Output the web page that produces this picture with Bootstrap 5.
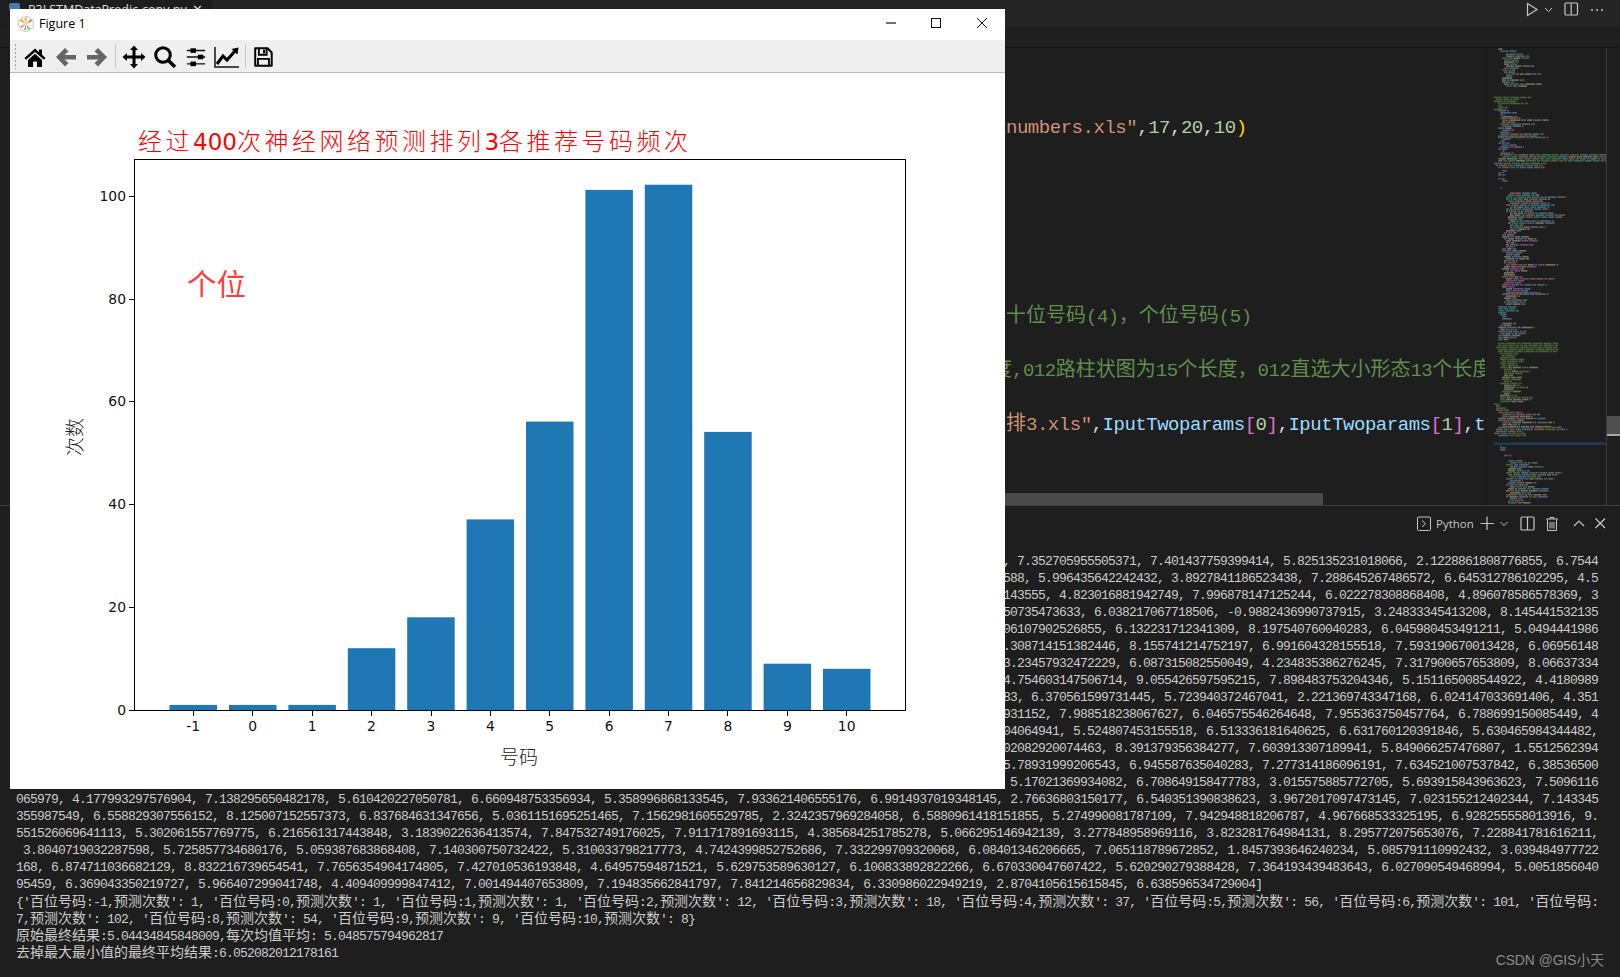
<!doctype html>
<html lang="zh">
<head>
<meta charset="utf-8">
<title>Figure 1</title>
<link href="https://cdn.jsdelivr.net/npm/bootstrap@5.3.0/dist/css/bootstrap.min.css" rel="stylesheet">
<style>
html,body{height:977px;overflow:hidden}
body{background:#1e1e1e;color:#ccc;font-family:"Liberation Sans","Noto Sans CJK SC",sans-serif}
.ide-tabs{height:26px;background:#252526;flex:none}
.ide-tab{width:212px;height:26px;background:#1e1e1e;color:#ddd;font:12.5px/20px "Open Sans",sans-serif}
.ide-tab-name{margin-left:7px;width:164px}
.ide-crumbs{height:22px;flex:none;background:#1f1f1f;border-bottom:1px solid #161616}
.ide-editor{height:457px;flex:none}
.code-pane{width:1486px;flex:none;border-right:1px solid #181818}
.code-view{flex:1 1 auto;padding-top:67px;font:19px/27px "Liberation Mono","Noto Sans CJK SC",monospace;letter-spacing:-.47px;color:#d4d4d4}
.code-line{height:27px;padding-left:1006px;white-space:nowrap}
.code-line-shift{padding-left:992px}
.code-line .han{font:20px/1 "Noto Sans CJK SC",sans-serif;letter-spacing:0}
.tk-str{color:#ce9178}.tk-num{color:#b5cea8}.tk-par{color:#ffd700}.tk-com{color:#5f8f4c}.tk-var{color:#9cdcfe}.tk-brk{color:#da70d6}
.hscroll{height:12px;flex:none;padding-left:60px}
.hscroll-thumb{width:1263px;height:12px;background:#4a4a4a}
.mini-map{width:120px;flex:none;background:#1e1e1e}
.mini-map svg{display:block}
.v-track{width:14px;flex:none;border-left:1px solid #3a3a3a}
.v-thumb{left:0;right:0;top:368px;height:20px;background:#4f4f4f;border-bottom:2px solid #a8a8a8}
.term{flex:1 1 auto;border-top:1px solid #3c3c3c;background:#1e1e1e}
.term-tools{height:35px;flex:none}
.term-body{padding:12px 22px 0 16px;font:13px/17px "Liberation Mono","Noto Sans CJK SC",monospace;letter-spacing:-.8px;color:#cccccc}
.term-line{height:17px;white-space:pre}
.term-line .han{font:14px/1 "Noto Sans CJK SC",sans-serif;letter-spacing:0}
.water{right:16px;bottom:7px;color:#8c8c8c;font:13.8px/18px "Liberation Sans","Noto Sans CJK SC",sans-serif}
.fig-win{left:10px;top:9px;width:995px;height:780px;background:#fff;color:#000}
.fig-title{height:31px;flex:none}
.fig-logo{margin:0 5px 1px 8px}
.fig-name{font:12.5px/29px "Open Sans",sans-serif;padding-bottom:2px}
.fig-tools{height:33px;flex:none;background:#efefef;border-bottom:1px solid #bcbcbc}
.fig-grip{width:3px;height:26px;margin:0 2px 0 4px;background-image:radial-gradient(#9a9a9a 1px,transparent 1px);background-size:3px 4px}
.tool-slot{width:31px;height:32px;border:0;background:none;padding:2px 0 0}
.tool-slot svg{display:block;margin:auto}
.tool-sep{width:1px;height:24px;margin:0 2.5px;background:#c9c9c9}
.tool-sep-b{margin-right:1.5px}
.fig-canvas{flex:1 1 auto}
.fig-canvas svg{display:block}
.tick-t{font:13.9px "DejaVu Sans",sans-serif;fill:#111}
.ttl-han{font:24px "Noto Sans CJK SC",sans-serif;font-weight:300;letter-spacing:3.5px}
.ttl-num{font:23px "DejaVu Sans",sans-serif;letter-spacing:0}
.ax-lab{font:19px "Noto Sans CJK SC",sans-serif;font-weight:300;fill:#222}
.pos-lab{font:29.5px "Noto Sans CJK SC",sans-serif;fill:#ff3b3b}
</style>
</head>
<body class="d-flex flex-column position-relative">

<div class="ide-tabs d-flex justify-content-between">
  <div class="ide-tab d-flex ps-2 overflow-hidden">
    <svg width="13" height="20" viewBox="0 0 13 20" class="flex-none"><rect x="1" y="3" width="11" height="7" rx="2" fill="#3d7fb3"/><rect x="3" y="9" width="9" height="6" rx="2" fill="#d7b84a"/></svg>
    <span class="ide-tab-name text-nowrap">P3LSTMDataPredic-copy.py</span>
    <span class="text-nowrap">✕</span>
  </div>
  <svg width="100" height="26" viewBox="1520 0 100 26">
    <path d="M1527.5 3.5 L1537 9.5 L1527.5 15.5Z" fill="none" stroke="#c5c5c5" stroke-width="1.2"/>
    <path d="M1545 8 L1548.5 11.5 L1552 8" fill="none" stroke="#c5c5c5"/>
    <rect x="1565" y="3" width="12.5" height="12" rx="1" fill="none" stroke="#c5c5c5" stroke-width="1.2"/><path d="M1571.2 3V15" stroke="#c5c5c5" stroke-width="1.2"/>
    <circle cx="1592" cy="10" r="1" fill="#c5c5c5"/><circle cx="1597" cy="10" r="1" fill="#c5c5c5"/><circle cx="1602" cy="10" r="1" fill="#c5c5c5"/>
  </svg>
</div>
<div class="ide-crumbs"></div>

<div class="ide-editor d-flex">
  <div class="code-pane d-flex flex-column overflow-hidden">
    <div class="code-view overflow-hidden">
      <div class="code-line"><span class="tk-str">numbers.xls"</span>,<span class="tk-num">17</span>,<span class="tk-num">20</span>,<span class="tk-num">10</span><span class="tk-par">)</span></div>
      <div class="code-line"></div><div class="code-line"></div><div class="code-line"></div><div class="code-line"></div><div class="code-line"></div><div class="code-line"></div>
      <div class="code-line tk-com"><span class="han">十位号码</span>(4)<span class="han">，个位号码</span>(5)</div>
      <div class="code-line"></div>
      <div class="code-line code-line-shift tk-com"><span class="han">度</span>,012<span class="han">路柱状图为</span>15<span class="han">个长度，</span>012<span class="han">直选大小形态</span>13<span class="han">个长度</span></div>
      <div class="code-line"></div>
      <div class="code-line"><span class="tk-str"><span class="han">排</span>3.xls"</span>,<span class="tk-var">IputTwoparams</span><span class="tk-brk">[</span><span class="tk-num">0</span><span class="tk-brk">]</span>,<span class="tk-var">IputTwoparams</span><span class="tk-brk">[</span><span class="tk-num">1</span><span class="tk-brk">]</span>,<span class="tk-var">t</span></div>
    </div>
    <div class="hscroll"><div class="hscroll-thumb"></div></div>
  </div>
  <div class="mini-map overflow-hidden"><svg id="miniSvg" width="120" height="457" viewBox="0 0 120 457"></svg></div>
  <div class="v-track position-relative"><div class="v-thumb position-absolute"></div></div>
</div>

<div class="term d-flex flex-column overflow-hidden">
  <div class="term-tools d-flex justify-content-end">
    <svg width="210" height="35" viewBox="1410 506 210 35">
      <rect x="1417.5" y="517" width="13" height="13.5" rx="1" fill="none" stroke="#c5c5c5"/><path d="M1422 520.5 L1425.5 523.7 L1422 527" fill="none" stroke="#c5c5c5"/>
      <text x="1436" y="527.5" fill="#c5c5c5" font-family="Open Sans" font-size="11.5">Python</text>
      <path d="M1487 516.5V530M1480.5 523.5H1494" stroke="#c5c5c5" stroke-width="1.2"/>
      <path d="M1500.5 522 L1504 525.5 L1507.5 522" fill="none" stroke="#c5c5c5"/>
      <rect x="1521" y="517" width="13" height="13" rx="1" fill="none" stroke="#c5c5c5" stroke-width="1.2"/><path d="M1527.5 517V530" stroke="#c5c5c5" stroke-width="1.2"/>
      <path d="M1546 519H1558M1550 519V517.5H1554V519M1547.5 519.5V530.5H1556.5V519.5M1550 522V528.5M1552 522V528.5M1554 522V528.5" fill="none" stroke="#c5c5c5"/>
      <path d="M1574 526 L1579 521 L1584 526" fill="none" stroke="#c5c5c5" stroke-width="1.2"/>
      <path d="M1595.5 518.5 L1605 528M1605 518.5 L1595.5 528" fill="none" stroke="#c5c5c5" stroke-width="1.3"/>
    </svg>
  </div>
  <div class="term-body">
    <div class="term-line text-end">, 7.352705955505371, 7.401437759399414, 5.825135231018066, 2.1228861808776855, 6.7544</div>
    <div class="term-line text-end">588, 5.996435642242432, 3.8927841186523438, 7.288645267486572, 6.645312786102295, 4.5</div>
    <div class="term-line text-end">143555, 4.823016881942749, 7.996878147125244, 6.022278308868408, 4.896078586578369, 3</div>
    <div class="term-line text-end">50735473633, 6.038217067718506, -0.9882436990737915, 3.24833345413208, 8.145441532135</div>
    <div class="term-line text-end">06107902526855, 6.132231712341309, 8.197540760040283, 6.045980453491211, 5.0494441986</div>
    <div class="term-line text-end">.308714151382446, 8.155741214752197, 6.991604328155518, 7.593190670013428, 6.06956148</div>
    <div class="term-line text-end">3.23457932472229, 6.087315082550049, 4.234835386276245, 7.317900657653809, 8.06637334</div>
    <div class="term-line text-end">4.754603147506714, 9.055426597595215, 7.898483753204346, 5.151165008544922, 4.4180989</div>
    <div class="term-line text-end">83, 6.370561599731445, 5.723940372467041, 2.221369743347168, 6.024147033691406, 4.351</div>
    <div class="term-line text-end">931152, 7.988518238067627, 6.046575546264648, 7.955363750457764, 6.788699150085449, 4</div>
    <div class="term-line text-end">04064941, 5.524807453155518, 6.513336181640625, 6.631760120391846, 5.630465984344482,</div>
    <div class="term-line text-end">02082920074463, 8.391379356384277, 7.603913307189941, 5.849066257476807, 1.5512562394</div>
    <div class="term-line text-end">5.78931999206543, 6.945587635040283, 7.277314186096191, 7.634521007537842, 6.38536500</div>
    <div class="term-line text-end"> 5.17021369934082, 6.708649158477783, 3.015575885772705, 5.693915843963623, 7.5096116</div>
    <div class="term-line">065979, 4.177993297576904, 7.138295650482178, 5.610420227050781, 6.660948753356934, 5.358996868133545, 7.933621406555176, 6.9914937019348145, 2.76636803150177, 6.540351390838623, 3.9672017097473145, 7.023155212402344, 7.143345</div>
    <div class="term-line">355987549, 6.558829307556152, 8.125007152557373, 6.837684631347656, 5.0361151695251465, 7.1562981605529785, 2.3242357969284058, 6.5880961418151855, 5.274990081787109, 7.942948818206787, 4.967668533325195, 6.928255558013916, 9.</div>
    <div class="term-line">551526069641113, 5.302061557769775, 6.216561317443848, 3.1839022636413574, 7.847532749176025, 7.911717891693115, 4.385684251785278, 5.066295146942139, 3.277848958969116, 3.823281764984131, 8.295772075653076, 7.228841781616211,</div>
    <div class="term-line"> 3.8040719032287598, 5.725857734680176, 5.059387683868408, 7.140300750732422, 5.310033798217773, 4.7424399852752686, 7.332299709320068, 6.08401346206665, 7.065118789672852, 1.8457393646240234, 5.085791110992432, 3.039484977722</div>
    <div class="term-line">168, 6.874711036682129, 8.832216739654541, 7.7656354904174805, 7.427010536193848, 4.64957594871521, 5.629753589630127, 6.100833892822266, 6.670330047607422, 5.620290279388428, 7.364193439483643, 6.027090549468994, 5.0051856040</div>
    <div class="term-line">95459, 6.369043350219727, 5.966407299041748, 4.409409999847412, 7.001494407653809, 7.194835662841797, 7.841214656829834, 6.330986022949219, 2.8704105615615845, 6.638596534729004]</div>
    <div class="term-line">{'<span class="han">百位号码</span>:-1,<span class="han">预测次数</span>': 1, '<span class="han">百位号码</span>:0,<span class="han">预测次数</span>': 1, '<span class="han">百位号码</span>:1,<span class="han">预测次数</span>': 1, '<span class="han">百位号码</span>:2,<span class="han">预测次数</span>': 12, '<span class="han">百位号码</span>:3,<span class="han">预测次数</span>': 18, '<span class="han">百位号码</span>:4,<span class="han">预测次数</span>': 37, '<span class="han">百位号码</span>:5,<span class="han">预测次数</span>': 56, '<span class="han">百位号码</span>:6,<span class="han">预测次数</span>': 101, '<span class="han">百位号码</span>:</div>
    <div class="term-line">7,<span class="han">预测次数</span>': 102, '<span class="han">百位号码</span>:8,<span class="han">预测次数</span>': 54, '<span class="han">百位号码</span>:9,<span class="han">预测次数</span>': 9, '<span class="han">百位号码</span>:10,<span class="han">预测次数</span>': 8}</div>
    <div class="term-line"><span class="han">原始最终结果</span>:5.04434845848009,<span class="han">每次均值平均</span>: 5.048575794962817</div>
    <div class="term-line"><span class="han">去掉最大最小值的最终平均结果</span>:6.052082012178161</div>
  </div>
</div>

<div class="water position-absolute">CSDN @GIS小天</div>

<!-- matplotlib figure window -->
<div class="fig-win position-absolute d-flex flex-column">
  <div class="fig-title d-flex align-items-center">
    <svg class="fig-logo" width="16" height="16" viewBox="0 0 16 16"><circle cx="8" cy="8" r="7.5" fill="#fff" stroke="#bbb" stroke-width=".8"/><path d="M8 8 L2 5 L3 3Z" fill="#f59a23"/><path d="M8 8 L6 2 L9 2Z" fill="#f4c020"/><path d="M8 8 L13 3 L14 5Z" fill="#e25a2b"/><path d="M8 8 L2 10 L4 12Z" fill="#f0a040"/><path d="M8 8 L13 13 L10 14Z" fill="#86c070"/><path d="M8 8 L8 14 L6 14Z" fill="#6aa0c8"/></svg>
    <span class="fig-name flex-grow-1">Figure 1</span>
    <svg width="120" height="31" viewBox="885 9 120 31">
      <path d="M886 23H896" stroke="#111" stroke-width="1.2"/>
      <rect x="931.5" y="18.5" width="9" height="9" fill="none" stroke="#111"/>
      <path d="M977 18 L987 28M987 18 L977 28" stroke="#111"/>
    </svg>
  </div>
  <div class="fig-tools d-flex align-items-center">
    <div class="fig-grip"></div>
    <button class="tool-slot" type="button" aria-label="Home"><svg width="24" height="24" viewBox="0 0 24 24"><path d="M12 3.5 L1.5 13 L3 14.7 L12 7 L21 14.7 L22.5 13 L19 9.8 V4.5 H16 V7.2Z M5 15 V22 H10 V16.5 H14 V22 H19 V15 L12 8.8Z" fill="#000"/></svg></button>
    <button class="tool-slot" type="button" aria-label="Back"><svg width="24" height="24" viewBox="0 0 24 24"><path d="M2 12 L11 3 L14.5 6.5 L10.5 10 H22 V14.5 H10.5 L14.5 18 L11 21.5Z" fill="#666"/></svg></button>
    <button class="tool-slot" type="button" aria-label="Forward"><svg width="24" height="24" viewBox="0 0 24 24"><path d="M22 12 L13 3 L9.5 6.5 L13.5 10 H2 V14.5 H13.5 L9.5 18 L13 21.5Z" fill="#666"/></svg></button>
    <div class="tool-sep"></div>
    <button class="tool-slot" type="button" aria-label="Pan"><svg width="24" height="24" viewBox="0 0 24 24"><path d="M12 0.5 L16 5 H13.5 V10.5 H19 V8 L23.5 12 L19 16 V13.5 H13.5 V19 H16 L12 23.5 L8 19 H10.5 V13.5 H5 V16 L0.5 12 L5 8 V10.5 H10.5 V5 H8Z" fill="#000"/></svg></button>
    <button class="tool-slot" type="button" aria-label="Zoom"><svg width="24" height="24" viewBox="0 0 24 24"><circle cx="10" cy="10" r="7.3" fill="none" stroke="#000" stroke-width="3"/><path d="M15.5 15.5 L22 22" stroke="#000" stroke-width="3.6"/></svg></button>
    <button class="tool-slot" type="button" aria-label="Subplots"><svg width="22" height="22" viewBox="0 0 24 24"><path d="M2 5H22M2 12H22M2 19.5H22" stroke="#111" stroke-width="1.6"/><rect x="6" y="2.5" width="6" height="5" fill="#000"/><rect x="14" y="9.5" width="6" height="5" fill="#000"/><rect x="6" y="17" width="6" height="5" fill="#000"/></svg></button>
    <button class="tool-slot" type="button" aria-label="Edit"><svg width="26" height="24" viewBox="0 0 26 24"><path d="M1 2V22H25" fill="none" stroke="#111" stroke-width="1.5"/><path d="M3 19 L9 11 L13 15 L21 6" fill="none" stroke="#000" stroke-width="3"/><path d="M17.5 4 L24.5 2.5 L23.5 9.5Z" fill="#000"/></svg></button>
    <div class="tool-sep tool-sep-b"></div>
    <button class="tool-slot" type="button" aria-label="Save"><svg width="22" height="22" viewBox="0 0 24 24"><path d="M3.5 2.5H17L21.5 7V21.5H3.5Z" fill="none" stroke="#000" stroke-width="2.2" stroke-linejoin="round"/><path d="M7.5 3V9.5H16V3" fill="none" stroke="#000" stroke-width="2"/><rect x="12" y="4" width="2.4" height="4" fill="#000"/><path d="M6.5 21V14H18.5V21" fill="none" stroke="#000" stroke-width="2"/></svg></button>
  </div>
  <div class="fig-canvas">
    <svg width="995" height="716" viewBox="10 73 995 716">
      <g fill="#1f77b4">
        <rect x="169.5" y="704.9" width="47.5" height="5.1"/>
        <rect x="229" y="704.9" width="47.5" height="5.1"/>
        <rect x="288.4" y="704.9" width="47.5" height="5.1"/>
        <rect x="347.8" y="648.2" width="47.5" height="61.8"/>
        <rect x="407.2" y="617.3" width="47.5" height="92.7"/>
        <rect x="466.6" y="519.4" width="47.5" height="190.6"/>
        <rect x="526" y="421.6" width="47.5" height="288.4"/>
        <rect x="585.4" y="189.9" width="47.5" height="520.1"/>
        <rect x="644.8" y="184.7" width="47.5" height="525.3"/>
        <rect x="704.2" y="431.9" width="47.5" height="278.1"/>
        <rect x="763.6" y="663.7" width="47.5" height="46.3"/>
        <rect x="823" y="668.8" width="47.5" height="41.2"/>
      </g>
      <rect x="134.5" y="159.5" width="771" height="551" fill="none" stroke="#000"/>
      <path stroke="#000" d="M129 710.5H134M129 607.5H134M129 504.5H134M129 401.5H134M129 299.5H134M129 196.5H134M193.5 711V716M252.5 711V716M312.5 711V716M371.5 711V716M431.5 711V716M490.5 711V716M549.5 711V716M609.5 711V716M668.5 711V716M727.5 711V716M787.5 711V716M846.5 711V716"/>
      <g class="tick-t" text-anchor="end">
        <text x="126" y="715">0</text><text x="126" y="612">20</text><text x="126" y="509">40</text><text x="126" y="406">60</text><text x="126" y="304">80</text><text x="126" y="201">100</text>
      </g>
      <g class="tick-t" text-anchor="middle">
        <text x="193.3" y="731">-1</text><text x="252.7" y="731">0</text><text x="312.1" y="731">1</text><text x="371.5" y="731">2</text><text x="430.9" y="731">3</text><text x="490.3" y="731">4</text><text x="549.7" y="731">5</text><text x="609.1" y="731">6</text><text x="668.5" y="731">7</text><text x="727.9" y="731">8</text><text x="787.3" y="731">9</text><text x="846.7" y="731">10</text>
      </g>
      <text x="138" y="150" fill="#ff0000"><tspan class="ttl-han">经过</tspan><tspan class="ttl-num">400</tspan><tspan class="ttl-han">次神经网络预测排列</tspan><tspan class="ttl-num">3</tspan><tspan class="ttl-han">各推荐号码频次</tspan></text>
      <text class="pos-lab" x="187" y="295">个位</text>
      <text class="ax-lab" x="500" y="764">号码</text>
      <text class="ax-lab" transform="translate(82 456) rotate(-90)">次数</text>
    </svg>
  </div>
</div>

<script src="https://cdn.jsdelivr.net/npm/bootstrap@5.3.0/dist/js/bootstrap.bundle.min.js"></script>
<script>
(function(){
  var svg=document.getElementById('miniSvg'),ns='http://www.w3.org/2000/svg',seed=7;
  function rnd(){seed=(seed*16807)%2147483647;return seed/2147483647;}
  var G='#4d6b3c',B='#4f6f88',W='#7d7d6b',P='#7a4f7c',O='#8a5b45',T='#2f7a64';
  // blocks in reference-crop units: y0,y1,x0,x1,palette
  var blocks=[[55,65,55,130,[B,T,W]],[70,170,66,205,[G,G,W,B]],[200,240,42,170,[G]],[240,260,55,150,[B,P,W]],
  [262,318,55,232,[B,B,O,W]],[320,323,42,270,[G]],[325,370,55,145,[B,B,P]],[372,392,55,378,[O,B,W,T,G],1],
  [398,415,42,295,[G,B,O]],[420,455,55,102,[B,B]],[465,472,55,95,[P,G]],[487,600,78,310,[B,W,T,O,B]],
  [600,690,66,190,[B,P,W]],[690,790,66,245,[B,W,P,O]],[790,825,66,275,[W,O,B,B]],[828,868,55,145,[T,B,B]],
  [878,930,55,180,[B,W]],[938,965,42,235,[G],1],[968,1010,60,170,[G]],[1010,1115,60,210,[G,G,W]],
  [1120,1140,42,130,[G]],[1145,1190,55,360,[B,O,W,B]],[1190,1220,42,378,[G,B,O]],[1245,1262,55,95,[B]],
  [1268,1278,66,100,[P,G]],[1290,1420,78,300,[B,B,W,O,G]]];
  function rect(x,y,w,h,c,o){var r=document.createElementNS(ns,'rect');r.setAttribute('x',x);r.setAttribute('y',y);r.setAttribute('width',w);r.setAttribute('height',h);r.setAttribute('fill',c);if(o)r.setAttribute('opacity',o);svg.appendChild(r);}
  rect(8,394.5,112,2.5,'#1f3a56');
  blocks.forEach(function(b){
    for(var zy=b[0];zy<b[1];zy+=6){
      var y=zy/3-18,x=b[2]/3-6,end=b[3]/3-6,lim=b[5]?end:x+(end-x)*(.2+.8*rnd()*Math.sqrt(rnd()));
      x+=Math.floor(rnd()*3)*2;
      while(x<lim){var w=2+rnd()*9;if(x+w>lim)w=lim-x;rect(x,y,w,1.6,b[4][Math.floor(rnd()*b[4].length)],.85);x+=w+1;}
    }
  });
})();
</script>
</body>
</html>
